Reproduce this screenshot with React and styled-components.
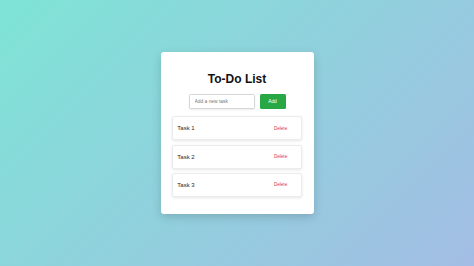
import React, { useState } from 'react';
import styled, { createGlobalStyle } from 'styled-components';

const GlobalStyle = createGlobalStyle`
  html, body {
    margin: 0;
    padding: 0;
  }
  body {
    font-family: "Liberation Sans", Arial, sans-serif;
  }
`;

const Page = styled.div`
  min-height: 100vh;
  display: flex;
  align-items: center;
  justify-content: center;
  background: linear-gradient(135deg, #7ee4d6 0%, #a3bde4 100%);
`;

const Card = styled.div`
  width: 153px;
  box-sizing: border-box;
  padding: 11px 11.3px 17.3px;
  background: #ffffff;
  border-radius: 3px;
  box-shadow: 0 3px 10px rgba(0, 0, 0, 0.16);
`;

const Title = styled.h1`
  margin: 9px 0 8px;
  font-size: 12px;
  line-height: 14px;
  font-weight: 700;
  text-align: center;
  color: #111;
`;

const InputRow = styled.div`
  display: flex;
  justify-content: center;
  gap: 5px;
  margin-bottom: 7.7px;
`;

const TaskInput = styled.input`
  width: 66px;
  height: 15px;
  box-sizing: border-box;
  padding: 0 5px;
  border: 1px solid #d6d6d6;
  border-radius: 1.5px;
  box-shadow: 0 1px 2px rgba(0, 0, 0, 0.08);
  font-family: "Liberation Sans", Arial, sans-serif;
  font-size: 4.9px;
  color: #333;
  outline: none;
  &::placeholder {
    color: #777;
  }
`;

const AddButton = styled.button`
  width: 26px;
  height: 15px;
  padding: 0;
  border: none;
  border-radius: 1.5px;
  background: #28a745;
  color: #ffffff;
  font-family: "Liberation Sans", Arial, sans-serif;
  font-size: 4.9px;
  cursor: pointer;
`;

const List = styled.ul`
  list-style: none;
  margin: 0;
  padding: 0;
  display: flex;
  flex-direction: column;
  gap: 4.3px;
`;

const Item = styled.li`
  height: 24px;
  box-sizing: border-box;
  display: flex;
  align-items: center;
  justify-content: space-between;
  padding: 0 14px 0 4.5px;
  background: #ffffff;
  border: 1px solid #ececec;
  border-radius: 2px;
  box-shadow: 0 1px 3px rgba(0, 0, 0, 0.1);
`;

const TaskText = styled.span`
  font-size: 6px;
  font-weight: 400;
  color: #2a2a2a;
`;

const DeleteButton = styled.button`
  padding: 0;
  border: none;
  background: none;
  color: #dc3545;
  font-family: "Liberation Sans", Arial, sans-serif;
  font-size: 4.6px;
  cursor: pointer;
`;

export default function App() {
  const [tasks, setTasks] = useState(['Task 1', 'Task 2', 'Task 3']);
  const [text, setText] = useState('');

  const addTask = () => {
    if (!text.trim()) return;
    setTasks([...tasks, text.trim()]);
    setText('');
  };

  return (
    <>
      <GlobalStyle />
      <Page>
        <Card>
          <Title>To-Do List</Title>
          <InputRow>
            <TaskInput
              placeholder="Add a new task"
              value={text}
              onChange={(e) => setText(e.target.value)}
            />
            <AddButton onClick={addTask}>Add</AddButton>
          </InputRow>
          <List>
            {tasks.map((t, i) => (
              <Item key={i}>
                <TaskText>{t}</TaskText>
                <DeleteButton onClick={() => setTasks(tasks.filter((_, j) => j !== i))}>
                  Delete
                </DeleteButton>
              </Item>
            ))}
          </List>
        </Card>
      </Page>
    </>
  );
}
